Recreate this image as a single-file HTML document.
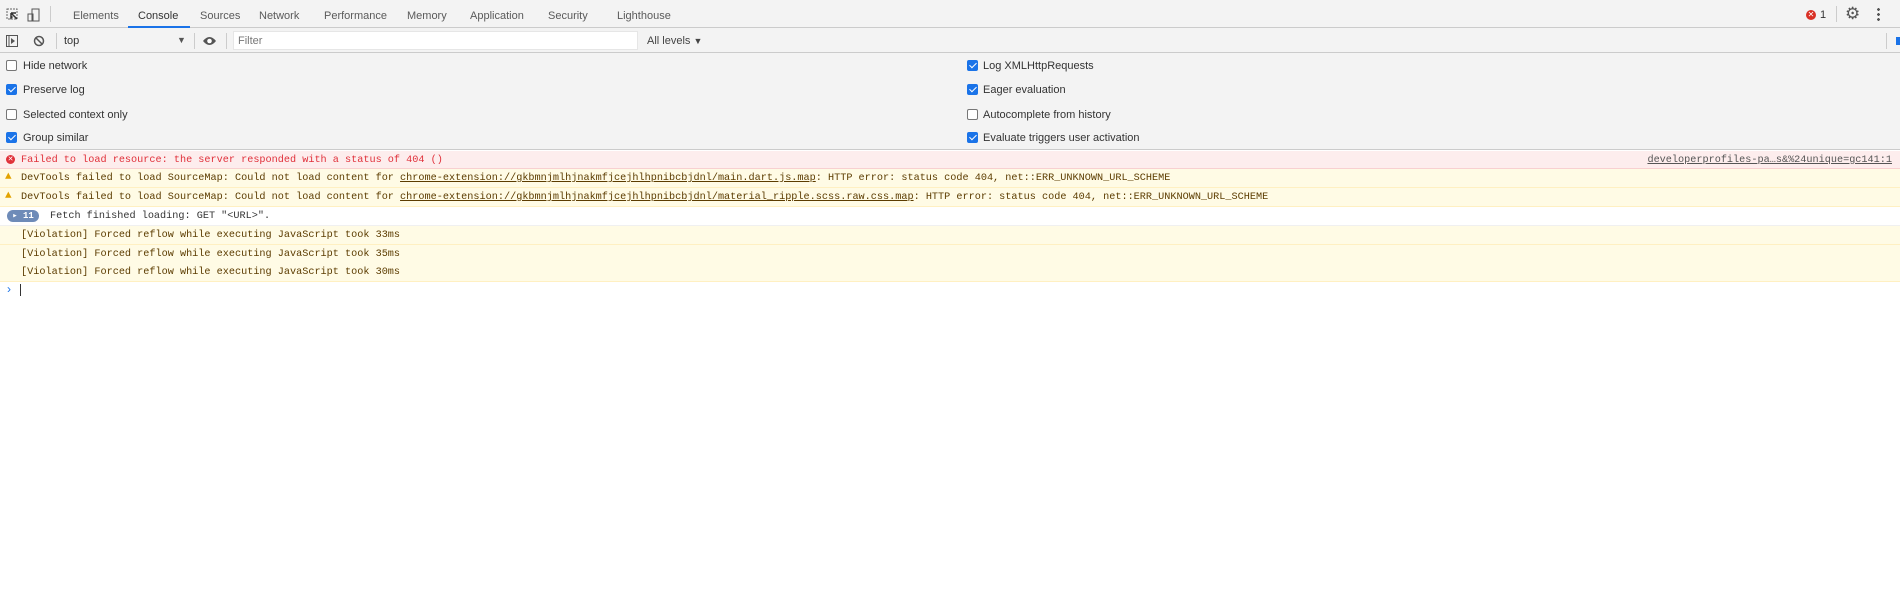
<!DOCTYPE html>
<html><head><meta charset="utf-8"><style>
*{margin:0;padding:0;box-sizing:border-box}
body{width:1900px;height:610px;background:#fff;position:relative;overflow:hidden;font-family:"Liberation Sans",sans-serif;font-size:11px;color:#333}
.a{position:absolute;white-space:nowrap}
.tab{position:absolute;top:10px;color:#5a5a5a}
.m{font-family:"Liberation Mono",monospace;font-size:10.2px}
.row{position:absolute;left:0;width:1900px;height:19px;border-bottom:1px solid #fff0c2}
.cb{position:absolute;width:11px;height:11px;border:1px solid #767676;border-radius:2px;background:#fff}
.cb.on{background:#1a73e8;border-color:#1a73e8}
.cb.on::after{content:"";position:absolute;left:3px;top:0px;width:3px;height:6px;border:solid #fff;border-width:0 1.6px 1.6px 0;transform:rotate(45deg)}
.lbl{position:absolute;color:#333}
u{text-decoration:underline}
</style></head><body>
<div class="a" style="left:0;top:0;width:1900px;height:28px;background:#f3f3f3;border-bottom:1px solid #cbcbcb"></div>
<div class="a" style="left:0;top:28px;width:1900px;height:25px;background:#f3f3f3;border-bottom:1px solid #cbcbcb"></div>
<div class="a" style="left:0;top:53px;width:1900px;height:97px;background:#f3f3f3;border-bottom:1px solid #cbcbcb"></div>
<svg class="a" style="left:6px;top:8px" width="34" height="14"><rect x="1" y="1" width="10" height="10" fill="none" stroke="#666" stroke-dasharray="2 1"/><path d="M5 5l6 6M5 5v5l1.5-1.5M5 5h5" stroke="#333" stroke-width="1.5" fill="none"/><rect x="26" y="1" width="7" height="12" fill="none" stroke="#555"/><rect x="22" y="6" width="5" height="7" fill="none" stroke="#555"/></svg>
<div class="a" style="left:50px;top:6px;width:1px;height:16px;background:#ccc"></div>
<div class="tab" style="left:73px">Elements</div>
<div class="tab" style="left:138px;color:#333">Console</div>
<div class="a" style="left:128px;top:26px;width:62px;height:2px;background:#1a73e8"></div>
<div class="tab" style="left:200px">Sources</div>
<div class="tab" style="left:259px">Network</div>
<div class="tab" style="left:324px">Performance</div>
<div class="tab" style="left:407px">Memory</div>
<div class="tab" style="left:470px">Application</div>
<div class="tab" style="left:548px">Security</div>
<div class="tab" style="left:617px">Lighthouse</div>
<div class="a" style="left:1806px;top:10px;width:10px;height:10px;border-radius:50%;background:#d93025;color:#fff;font-size:8px;line-height:10px;text-align:center">✕</div>
<div class="a" style="left:1820px;top:9px;color:#333">1</div>
<div class="a" style="left:1836px;top:6px;width:1px;height:16px;background:#ccc"></div>
<div class="a" style="left:1845px;top:5px;font-size:17px;color:#555;line-height:17px">⚙</div>
<div class="a" style="left:1877px;top:7px;width:3px;height:14px;background:radial-gradient(circle,#555 1.3px,transparent 1.5px) 0 0/3px 5px"></div>
<svg class="a" style="left:6px;top:35px" width="40" height="14"><rect x="0.5" y="0.5" width="11" height="11" fill="none" stroke="#555"/><path d="M3 1v10" stroke="#555"/><path d="M5 3l4 3-4 3z" fill="#555"/><circle cx="33" cy="6" r="4.5" fill="none" stroke="#555" stroke-width="1.5"/><path d="M30 3l6 6" stroke="#555" stroke-width="1.5"/></svg>
<div class="a" style="left:56px;top:33px;width:1px;height:16px;background:#ccc"></div>
<div class="a" style="left:64px;top:35px">top</div>
<div class="a" style="left:177px;top:35px;font-size:9px;color:#555">▼</div>
<div class="a" style="left:194px;top:33px;width:1px;height:16px;background:#ccc"></div>
<svg class="a" style="left:202px;top:35px" width="15" height="12"><path d="M1 6Q7.5-2 14 6Q7.5 14 1 6z" fill="#555"/><circle cx="7.5" cy="6" r="2.3" fill="#fff"/></svg>
<div class="a" style="left:226px;top:33px;width:1px;height:16px;background:#ccc"></div>
<div class="a" style="left:233px;top:31px;width:405px;height:19px;background:#fff;border:1px solid #e6e6e6;color:#777;padding:3px 0 0 4px">Filter</div>
<div class="a" style="left:647px;top:35px;color:#444">All levels <span style="font-size:9px">▼</span></div>
<div class="a" style="left:1886px;top:33px;width:1px;height:16px;background:#ccc"></div>
<div class="a" style="left:1896px;top:37px;width:4px;height:8px;background:#1a73e8"></div>
<div class="cb" style="left:6px;top:60px"></div><div class="lbl" style="left:23px;top:60px">Hide network</div>
<div class="cb on" style="left:6px;top:84px"></div><div class="lbl" style="left:23px;top:84px">Preserve log</div>
<div class="cb" style="left:6px;top:109px"></div><div class="lbl" style="left:23px;top:109px">Selected context only</div>
<div class="cb on" style="left:6px;top:132px"></div><div class="lbl" style="left:23px;top:132px">Group similar</div>
<div class="cb on" style="left:967px;top:60px"></div><div class="lbl" style="left:983px;top:60px">Log XMLHttpRequests</div>
<div class="cb on" style="left:967px;top:84px"></div><div class="lbl" style="left:983px;top:84px">Eager evaluation</div>
<div class="cb" style="left:967px;top:109px"></div><div class="lbl" style="left:983px;top:109px">Autocomplete from history</div>
<div class="cb on" style="left:967px;top:132px"></div><div class="lbl" style="left:983px;top:132px">Evaluate triggers user activation</div>
<div class="row m" style="top:151px;height:18px;background:#fdeded;border-bottom:1px solid #f8d0d0;color:#e0303a">
<div class="a" style="left:6px;top:4px;width:9px;height:9px;border-radius:50%;background:#e0303a;color:#fff;font-size:7px;line-height:9px;text-align:center;font-family:'Liberation Sans'">✕</div>
<div class="a" style="left:21px;top:4px">Failed to load resource: the server responded with a status of 404 ()</div>
<div class="a" style="right:8px;top:4px;color:#555"><u>developerprofiles-pa…s&amp;%24unique=gc141:1</u></div></div>
<div class="row m" style="top:169px;background:#fffbe5;color:#5c3c00">
<div class="a" style="left:5px;top:2px;color:#e3a300;font-size:11px">▲</div>
<div class="a" style="left:21px;top:4px">DevTools failed to load SourceMap: Could not load content for <u>chrome-extension://gkbmnjmlhjnakmfjcejhlhpnibcbjdnl/main.dart.js.map</u>: HTTP error: status code 404, net::ERR_UNKNOWN_URL_SCHEME</div></div>
<div class="row m" style="top:188px;background:#fffbe5;color:#5c3c00">
<div class="a" style="left:5px;top:2px;color:#e3a300;font-size:11px">▲</div>
<div class="a" style="left:21px;top:4px">DevTools failed to load SourceMap: Could not load content for <u>chrome-extension://gkbmnjmlhjnakmfjcejhlhpnibcbjdnl/material_ripple.scss.raw.css.map</u>: HTTP error: status code 404, net::ERR_UNKNOWN_URL_SCHEME</div></div>
<div class="row m" style="top:207px;background:#fff;border-bottom:1px solid #f0f0f0;color:#333">
<div class="a" style="left:7px;top:3px;width:32px;height:12px;border-radius:6px;background:#6e8bb8;color:#fff;font-size:9px;line-height:12px;text-align:center;font-weight:bold">▸ 11</div>
<div class="a" style="left:50px;top:4px">Fetch finished loading: GET "&lt;URL&gt;".</div></div>
<div class="row m" style="top:226px;background:#fffbe5;color:#5c3c00"><div class="a" style="left:21px;top:4px">[Violation] Forced reflow while executing JavaScript took 33ms</div></div>
<div class="row m" style="top:245px;background:#fffbe5;color:#5c3c00"><div class="a" style="left:21px;top:4px">[Violation] Forced reflow while executing JavaScript took 35ms</div></div>
<div class="row m" style="top:263px;background:#fffbe5;color:#5c3c00"><div class="a" style="left:21px;top:4px">[Violation] Forced reflow while executing JavaScript took 30ms</div></div>
<div class="a" style="left:7px;top:282px;color:#1a73e8;font-size:12px">›</div>
<div class="a" style="left:20px;top:284px;width:1px;height:12px;background:#333"></div>
</body></html>
